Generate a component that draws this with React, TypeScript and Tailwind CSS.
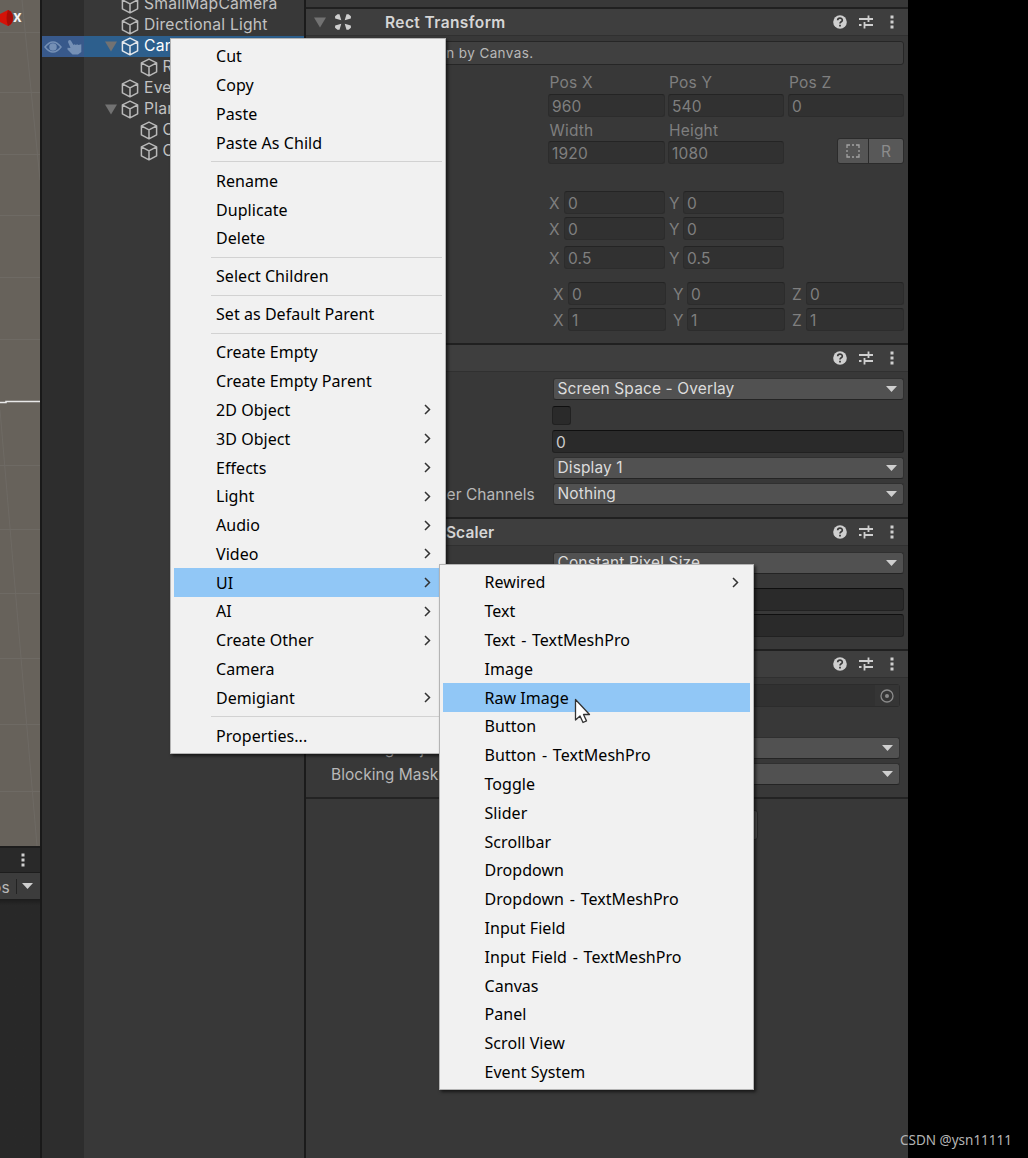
import React from 'react';
import clsx from 'clsx';

type MenuEntry = { label: string; sub?: boolean; active?: boolean } | null;

const contextMenu: MenuEntry[] = [
  { label: 'Cut' },
  { label: 'Copy' },
  { label: 'Paste' },
  { label: 'Paste As Child' },
  null,
  { label: 'Rename' },
  { label: 'Duplicate' },
  { label: 'Delete' },
  null,
  { label: 'Select Children' },
  null,
  { label: 'Set as Default Parent' },
  null,
  { label: 'Create Empty' },
  { label: 'Create Empty Parent' },
  { label: '2D Object', sub: true },
  { label: '3D Object', sub: true },
  { label: 'Effects', sub: true },
  { label: 'Light', sub: true },
  { label: 'Audio', sub: true },
  { label: 'Video', sub: true },
  { label: 'UI', sub: true, active: true },
  { label: 'AI', sub: true },
  { label: 'Create Other', sub: true },
  { label: 'Camera' },
  { label: 'Demigiant', sub: true },
  null,
  { label: 'Properties...' },
];

const uiMenu: MenuEntry[] = [
  { label: 'Rewired', sub: true },
  { label: 'Text' },
  { label: 'Text - TextMeshPro' },
  { label: 'Image' },
  { label: 'Raw Image', active: true },
  { label: 'Button' },
  { label: 'Button - TextMeshPro' },
  { label: 'Toggle' },
  { label: 'Slider' },
  { label: 'Scrollbar' },
  { label: 'Dropdown' },
  { label: 'Dropdown - TextMeshPro' },
  { label: 'Input Field' },
  { label: 'Input Field - TextMeshPro' },
  { label: 'Canvas' },
  { label: 'Panel' },
  { label: 'Scroll View' },
  { label: 'Event System' },
];

const tree = [
  { label: 'SmallMapCamera' },
  { label: 'Directional Light' },
  { label: 'Canvas', open: true, selected: true },
  { label: 'RawImage', child: true },
  { label: 'EventSystem' },
  { label: 'Plane', open: true },
  { label: 'Cube', child: true },
  { label: 'Cube', child: true },
];

const Menu: React.FC<{ items: MenuEntry[]; className?: string }> = ({ items, className }) => (
  <div
    className={clsx(
      'absolute border border-[#b4b4b4] bg-[#f1f1f1] px-[3px] pt-[3px] text-[16px] tracking-[0.05px] text-black shadow-[2px_2px_3px_rgba(0,0,0,0.6)] font-["Noto_Sans",sans-serif]',
      className,
    )}
  >
    {items.map((item, i) =>
      item ? (
        <div
          key={i}
          className={clsx('flex h-[28.8px] items-center justify-between pl-[42px] pr-[11px]', item.active && 'bg-[#91c7f6]')}
        >
          <span className={clsx('whitespace-nowrap', item.label.includes(' - ') && '[word-spacing:1.5px]')}>{item.label}</span>
          {item.sub && (
            <svg width="7" height="11" viewBox="0 0 7 11" fill="none" stroke="#333" strokeWidth="1.5">
              <path d="M1 1l4.5 4.5L1 10" />
            </svg>
          )}
        </div>
      ) : (
        <div key={i} className="flex h-[9.2px] items-center pl-[37px]">
          <div className="h-px w-full bg-[#d2d2d2]" />
        </div>
      ),
    )}
  </div>
);

const Cube: React.FC<{ bright?: boolean }> = ({ bright }) => (
  <svg width="18" height="19" viewBox="0 0 18 19" fill="none" stroke={bright ? '#e4e8ec' : '#b9b9b9'} strokeWidth="1.5" strokeLinejoin="round" className="shrink-0">
    <path d="M9 1.2l7.6 3.7v8.9L9 17.8l-7.6-4V4.9zM1.4 4.9L9 8.8l7.6-3.9M9 8.8v9" />
  </svg>
);

const Triangle: React.FC = () => (
  <svg width="12" height="11" viewBox="0 0 12 11" className="shrink-0">
    <path d="M0 .5h12L6 10.5z" fill="#727272" />
  </svg>
);

const Caret: React.FC = () => (
  <svg width="11" height="6" viewBox="0 0 11 6" className="shrink-0">
    <path d="M0 0h11L5.5 6z" fill="#cfcfcf" />
  </svg>
);

const Dots: React.FC = () => (
  <svg width="4" height="14" viewBox="0 0 4 14" fill="#cfcfcf">
    <path d="M.5.5h3v3h-3zM.5 5.5h3v3h-3zM.5 10.5h3v3h-3z" />
  </svg>
);

const Header: React.FC<{ title?: string; rect?: boolean }> = ({ title, rect }) => (
  <div className="flex h-[29px] shrink-0 items-center border-t-2 border-b border-t-[#202020] border-b-[#303030] bg-[#3e3e3e] pl-2 pr-[14px]">
    <Triangle />
    {rect && (
      <svg width="16" height="16" viewBox="0 0 16 16" fill="#cfcfcf" className="ml-[9px]">
        <path d="M0 2.5Q0 2 2.5.2L4.5.2 6.3 6.3.2 4.5zM16 2.5Q16 2 13.5.2L11.5.2 9.7 6.3 15.8 4.5zM0 13.5Q0 14 2.5 15.8L4.5 15.8 6.3 9.7.2 11.5zM16 13.5Q16 14 13.5 15.8L11.5 15.8 9.7 9.7 15.8 11.5z" />
      </svg>
    )}
    <span className={clsx('grow whitespace-nowrap pt-[2px] text-[15.5px] font-semibold text-[#d6d6d6]', rect ? 'ml-[34px] tracking-[0.4px]' : 'ml-[59px] tracking-[0.15px]')}>
      {title}
    </span>
    <div className="flex items-center">
      <svg width="14" height="14" viewBox="0 0 14 14">
        <circle cx="7" cy="7" r="6.8" fill="#cfcfcf" />
        <path d="M4.7 5.3C4.7 2.5 9.3 2.5 9.3 5.2 9.3 6.8 7 6.7 7 8.5" fill="none" stroke="#3a3a3a" strokeWidth="1.7" />
        <path d="M6.1 9.7h1.8v1.8H6.1z" fill="#3a3a3a" />
      </svg>
      <svg width="14" height="14" viewBox="0 0 14 14" fill="none" stroke="#cfcfcf" strokeWidth="1.8" className="ml-[12px]">
        <path d="M0 4h9M9.5.5v6.5M9 4h5M0 10h2.5M5.5 7v6.5M5.5 10H14" />
      </svg>
      <span className="ml-[17px]">
        <Dots />
      </span>
    </div>
  </div>
);

const Field: React.FC<{ value?: string; className?: string; dim?: boolean }> = ({ value, className, dim }) => (
  <div
    className={clsx(
      'flex h-[23px] shrink-0 items-center rounded-[3px] border pl-[3px] pt-[2px]',
      dim ? 'border-[#2c2c2c] border-t-[#242424] bg-[#313131] text-[#7f7f7f]' : 'border-[#212121] border-t-[#0f0f0f] bg-[#2a2a2a] text-[#cdcdcd]',
      className,
    )}
  >
    {value}
  </div>
);

const Dropdown: React.FC<{ value?: string }> = ({ value }) => (
  <div className="ml-px flex h-[22px] grow items-center justify-between rounded-[3px] border border-[#303030] border-b-[#242424] bg-[#515151] pl-[3.5px] pr-[6px] text-[#dcdcdc]">
    <span className="tracking-[0.12px]">{value}</span>
    <Caret />
  </div>
);

const Row: React.FC<{ label?: string; className?: string; children?: React.ReactNode }> = ({ label, className, children }) => (
  <div className={clsx('flex shrink-0 items-center pl-[25px]', className)}>
    <span className="w-[221px] shrink-0 whitespace-nowrap pt-[2px] tracking-[0.05px] text-[#b8b8b8]">{label}</span>
    {children}
  </div>
);

// x / y pair used by the anchor and pivot rows
const Pair: React.FC<{ x: string; y: string; className: string }> = ({ x, y, className }) => (
  <div className={clsx('flex items-center pl-[243px] text-[#7f7f7f]', className)}>
    <span className="w-[15px] pt-[2px]">X</span>
    <Field dim value={x} className="w-[101px]" />
    <span className="ml-[4px] w-[14px] pt-[2px]">Y</span>
    <Field dim value={y} className="w-[101px]" />
  </div>
);

const Triple: React.FC<{ value: string; className: string }> = ({ value, className }) => (
  <div className={clsx('flex items-center pl-[247px] text-[#7f7f7f]', className)}>
    <span className="w-[15px] pt-[2px]">X</span>
    <Field dim value={value} className="w-[98px]" />
    <span className="ml-[7px] w-[14px] pt-[2px]">Y</span>
    <Field dim value={value} className="w-[98px]" />
    <span className="ml-[7px] w-[14px] pt-[2px]">Z</span>
    <Field dim value={value} className="w-[98px]" />
  </div>
);

const SceneView: React.FC = () => (
  <div className="flex w-[42px] shrink-0 flex-col border-r-2 border-[#191919] bg-[#252525]">
    <svg width="40" height="846" viewBox="0 0 40 846" className="shrink-0">
      <rect width="40" height="846" fill="#67625b" />
      <g stroke="#6e6a64" strokeWidth="1" fill="none">
        <path d="M0 32.5h40M0 92.5h40M0 154.5h40M0 215.5h40M0 277.5h40M0 339.5h40M0 465.5h40M0 529.5h40M0 593.5h40M0 658.5h40M0 724.5h40M0 791.5h40M22 0l18 180M0 410l37 436" />
      </g>
      <path d="M0 402.5h6v-1h34" stroke="#e8e8e8" strokeWidth="1.5" fill="none" />
      <path d="M0 14l8-4q5 2 5 8t-5 8l-8-4z" fill="#d51208" />
      <path d="M8 10q5 2 5 8t-5 8q-3-8 0-16z" fill="#a80c06" />
      <text x="13" y="22" fill="#f2f2f2" fontSize="15" fontWeight="700" fontFamily="Inter">x</text>
    </svg>
    <div className="flex h-[27px] shrink-0 items-center justify-center border-t-2 border-b border-[#1d1d1d] bg-[#292929] pl-[5px]">
      <Dots />
    </div>
    <div className="flex h-[27px] shrink-0 items-center justify-end border-b border-[#1d1d1d] bg-[#3c3c3c] pr-[7px] text-[#b8b8b8]">
      <span className="pt-[3px]">os</span>
      <span className="ml-[6px] mr-[5px] h-[15px] w-px shrink-0 bg-[#232323]" />
      <Caret />
    </div>
    <div className="grow bg-linear-to-b from-[#1e1e1e] to-[#282828] to-2%" />
  </div>
);

const Hierarchy: React.FC = () => (
  <div className="flex w-[264px] shrink-0 border-r-2 border-[#1b1b1b]">
    <div className="w-[42px] shrink-0 bg-[#2d2d2d]">
      <div className="mt-[36px] flex h-[21px] items-center justify-center gap-[5px] bg-[#38598b]">
        <svg width="18" height="12" viewBox="0 0 18 12" fill="none" stroke="#7590b5" strokeWidth="1.5">
          <path d="M1 6q8-10 16 0-8 10-16 0z" />
          <circle cx="9" cy="6" r="3" fill="#7590b5" />
        </svg>
        <svg width="15" height="16" viewBox="0 0 15 16" fill="#7590b5">
          <path d="M1.5 1.5q1.300-1.200 2.300 0L6.500 6l1-.8 1.500.8 1-.8 1.500.8 2.800-.8V13L11 15.500H5.500L.5 10.500V8.800l3 .2L1 3z" />
        </svg>
      </div>
    </div>
    <div className="grow overflow-hidden bg-[#383838]">
      <div className="-mt-[6px]">
        {tree.map((row, i) => (
          <div key={i} className={clsx('flex h-[21px] items-center pb-[1px]', row.selected && 'bg-[#2d5f8d]', row.child ? 'pl-[55.5px]' : 'pl-[21px]')}>
            {!row.child && <span className="w-[16px] shrink-0 pt-[1px]">{row.open && <Triangle />}</span>}
            <Cube bright={row.selected} />
            <span className={clsx('ml-[5px] whitespace-nowrap text-[15.7px]', row.selected ? 'text-white' : 'text-[#c2c2c2]')}>{row.label}</span>
          </div>
        ))}
      </div>
    </div>
  </div>
);

const Inspector: React.FC = () => (
  <div className="flex w-[602px] shrink-0 flex-col bg-[#383838] pt-[7px]">
    <Header title="Rect Transform" rect />
    <div className="ml-[6px] mr-[4px] mt-[5px] flex h-[24px] shrink-0 items-center rounded-[3px] border border-[#262626] bg-[#404040] pl-[9px] pt-[2px] text-[13.5px] tracking-[0.4px] text-[#b8b8b8]">
      Some values driven by Canvas.
    </div>
    <div className="mt-[8px] flex h-[20px] shrink-0 items-center pl-[243.5px] text-[#7f7f7f]">
      <span className="w-[119.5px]">Pos X</span>
      <span className="w-[120px]">Pos Y</span>
      <span>Pos Z</span>
    </div>
    <div className="mt-[1px] flex shrink-0 gap-[3px] pl-[242px]">
      <Field dim value="960" className="w-[117px]" />
      <Field dim value="540" className="w-[116px]" />
      <Field dim value="0" className="ml-px w-[116px]" />
    </div>
    <div className="mt-[3px] flex h-[20px] shrink-0 items-center pl-[243.5px] pt-[1px] text-[#7f7f7f]">
      <span className="w-[119.5px]">Width</span>
      <span>Height</span>
    </div>
    <div className="mt-px flex h-[23px] shrink-0 gap-[3px] pl-[242px]">
      <Field dim value="1920" className="w-[117px]" />
      <Field dim value="1080" className="w-[116px]" />
      <div className="-mt-[3px] ml-[50px] flex h-[26px] gap-px rounded-[3px] border border-[#2b2b2b] bg-[#2b2b2b] text-[#8c8c8c]">
        <div className="flex w-[30px] items-center justify-center rounded-l-[2px] bg-[#555]">
          <svg width="14" height="14" viewBox="0 0 14 14" fill="none" stroke="#a3a3a3" strokeWidth="1.3">
            <path d="M1 4V1h3M6 1h2M10 1h3v3M13 6v2M13 10v3h-3M8 13H6M4 13H1v-3M1 8V6" />
          </svg>
        </div>
        <div className="flex w-[34px] items-center justify-center rounded-r-[2px] bg-[#585858] pt-[2px]">R</div>
      </div>
    </div>
    <Pair x="0" y="0" className="mt-[27px]" />
    <Pair x="0" y="0" className="mt-[3px]" />
    <Pair x="0.5" y="0.5" className="mt-[6px]" />
    <Triple value="0" className="mt-[13px]" />
    <Triple value="1" className="mt-[3px]" />

    <div className="mt-[12px] flex shrink-0 flex-col">
      <Header title="Canvas" />
      <Row className="mt-[6px] pr-[4px]">
        <Dropdown value="Screen Space - Overlay" />
      </Row>
      <Row className="mt-[6px]">
        <div className="h-[19px] w-[19px] rounded-[3px] border border-[#212121] border-t-[#0f0f0f] bg-[#2a2a2a]" />
      </Row>
      <Row className="mt-[5px] pr-[4px]">
        <Field value="0" className="grow" />
      </Row>
      <Row label="Target Display" className="mt-[4px] pr-[4px]">
        <Dropdown value="Display 1" />
      </Row>
      <Row label="Additional Shader Channels" className="mt-[4px] pr-[4px]">
        <Dropdown value="Nothing" />
      </Row>
    </div>

    <div className="mt-[12px] flex shrink-0 flex-col">
      <Header title="Canvas Scaler" />
      <Row className="mt-[6px] pr-[4px]">
        <Dropdown value="Constant Pixel Size" />
      </Row>
      <Row className="mt-[14px] pr-[4px]">
        <Field className="grow" />
      </Row>
      <Row className="mt-[3px] pr-[4px]">
        <Field className="grow" />
      </Row>
    </div>

    <div className="mt-[12px] flex shrink-0 flex-col">
      <Header />
      <Row className="mt-[6px] pr-[8px]">
        <div className="flex h-[23px] grow items-center justify-end rounded-[3px] border border-[#2c2c2c] bg-[#313131]">
          <span className="flex h-full w-[24px] items-center justify-center bg-[#353535]">
            <svg width="14" height="14" viewBox="0 0 14 14" fill="none" stroke="#8b8b8b">
              <circle cx="7" cy="7" r="6" strokeWidth="1.3" />
              <circle cx="7" cy="7" r="2" fill="#8b8b8b" stroke="none" />
            </svg>
          </span>
        </div>
      </Row>
      <Row label="Blocking Objects" className="mt-[30px] pr-[8px]">
        <Dropdown />
      </Row>
      <Row label="Blocking Mask" className="mt-[4px] pr-[8px]">
        <Dropdown />
      </Row>
    </div>
    <div className="mt-[12px] h-[2px] shrink-0 bg-[#232323]" />
    <div className="ml-[148px] mt-[11px] h-[30px] w-[304px] shrink-0 rounded-[3px] border border-[#2b2b2b] bg-[#505050]" />
  </div>
);

export default function App() {
  return (
    <div className="relative flex h-[1158px] w-[1028px] overflow-hidden bg-black text-[15.5px] leading-none tracking-[0.2px] font-[Inter,sans-serif]">
      <SceneView />
      <Hierarchy />
      <Inspector />

      <Menu items={contextMenu} className="left-[170px] top-[38px] h-[716px] w-[276px]" />
      <Menu items={uiMenu} className="left-[438.5px] top-[564px] h-[526px] w-[315px]" />

      <svg width="17" height="26" viewBox="0 0 17 26" className="absolute left-[574px] top-[698px]">
        <path d="M1.5 1.5v20.500l4.500-4 3 6.500 3.500-1.600-3-6.400h6z" fill="#fff" stroke="#333" strokeWidth="1.3" strokeLinejoin="round" />
      </svg>

      <span className="absolute left-[900px] top-[1134px] whitespace-nowrap text-[13.5px] tracking-normal text-[#b5b5b5] font-['Noto_Sans',sans-serif]">
        CSDN @ysn11111
      </span>
    </div>
  );
}
